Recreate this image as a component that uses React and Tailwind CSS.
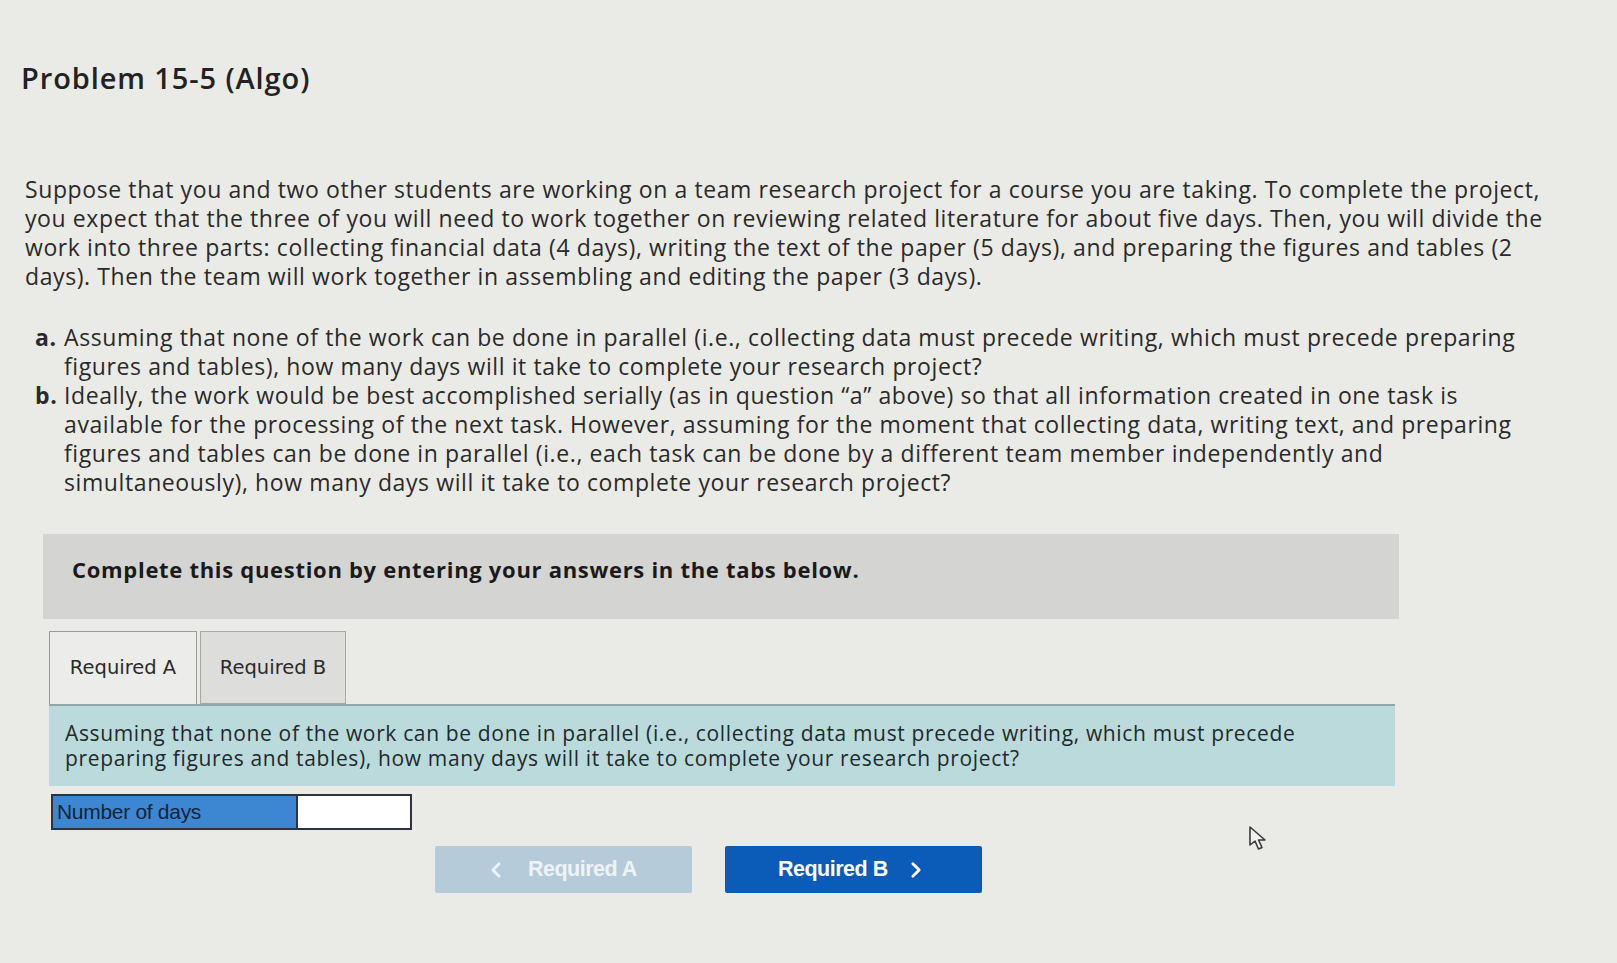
import { HiChevronLeft, HiChevronRight } from 'react-icons/hi2'

const body = "font-['Open_Sans',sans-serif]"

export default function App() {
  return (
    <div className="relative min-h-[963px] w-[1617px] overflow-hidden bg-[#eaeae7] text-[#1c1c1c]">
      {/* Title */}
      <h1 className={`pl-[21px] pt-[59px] text-[29px] font-semibold leading-[38px] tracking-[0.9px] text-[#222] ${body}`}>
        Problem 15-5 (Algo)
      </h1>

      {/* Problem text */}
      <p className={`mt-[78px] whitespace-nowrap pl-[25px] text-[23px] leading-[29px] tracking-[0.6px] text-[#2a2a2a] ${body}`}>
        Suppose that you and two other students are working on a team research project for a course you are taking. To complete the project,
        <br />
        you expect that the three of you will need to work together on reviewing related literature for about five days. Then, you will divide the
        <br />
        work into three parts: collecting financial data (4 days), writing the text of the paper (5 days), and preparing the figures and tables (2
        <br />
        days). Then the team will work together in assembling and editing the paper (3 days).
      </p>

      <div className={`mt-[32px] whitespace-nowrap pl-[35px] text-[23px] leading-[29px] tracking-[0.6px] text-[#2a2a2a] ${body}`}>
        <div className="flex">
          <span className="w-[29px] shrink-0 font-bold">a.</span>
          <span>
            Assuming that none of the work can be done in parallel (i.e., collecting data must precede writing, which must precede preparing
            <br />
            figures and tables), how many days will it take to complete your research project?
          </span>
        </div>
        <div className="flex">
          <span className="w-[29px] shrink-0 font-bold">b.</span>
          <span>
            Ideally, the work would be best accomplished serially (as in question “a” above) so that all information created in one task is
            <br />
            available for the processing of the next task. However, assuming for the moment that collecting data, writing text, and preparing
            <br />
            figures and tables can be done in parallel (i.e., each task can be done by a different team member independently and
            <br />
            simultaneously), how many days will it take to complete your research project?
          </span>
        </div>
      </div>

      {/* Instruction box */}
      <div className="ml-[43px] mt-[37px] h-[85px] w-[1356px] bg-[#d4d4d2] pl-[29px] pt-[21px]">
        <p className={`text-[22px] font-bold leading-[28px] tracking-[0.7px] text-[#1a1a1a] ${body}`}>
          Complete this question by entering your answers in the tabs below.
        </p>
      </div>

      {/* Tabs */}
      <div className="ml-[49px] mt-[12px] flex gap-[3px] font-['DejaVu_Sans',sans-serif] text-[19.5px] text-[#2b2b2b]">
        <div className="flex h-[73px] w-[148px] items-center justify-center border border-b-0 border-[#9a9a98] bg-[#ececea]">
          Required A
        </div>
        <div className="flex h-[73px] w-[146px] items-center justify-center border border-[#a8a8a6] bg-[#dddddb]">
          Required B
        </div>
      </div>

      {/* Question panel */}
      <div className="ml-[49px] h-[82px] w-[1346px] border-t-2 border-[#8fa8aa] bg-[#badadb] pl-[16px] pt-[15px]">
        <p className={`text-[21px] leading-[25px] tracking-[0.65px] text-[#1e2a2c] ${body}`}>
          Assuming that none of the work can be done in parallel (i.e., collecting data must precede writing, which must precede
          <br />
          preparing figures and tables), how many days will it take to complete your research project?
        </p>
      </div>

      {/* Answer row */}
      <div className="ml-[51px] mt-[8px] flex h-[36px] w-[361px] border-2 border-[#2b3440]">
        <div className="flex w-[243px] shrink-0 items-center whitespace-nowrap bg-[#3d87d2] pl-[4px] font-['Liberation_Sans',sans-serif] text-[21px] tracking-[-0.3px] text-[#10243a]">
          Number of days
        </div>
        <input
          type="text"
          className="w-0 min-w-0 flex-1 border-l-2 border-[#2b3440] bg-white outline-none"
          aria-label="Number of days"
        />
      </div>

      {/* Navigation buttons */}
      <div className="ml-[435px] mt-[16px] flex gap-[33px] font-['Liberation_Sans',sans-serif] text-[21.5px] font-bold tracking-[-0.5px]">
        <button
          type="button"
          className="flex h-[47px] w-[257px] items-center gap-[22px] rounded-[2px] bg-[#b6cbd9] pl-[51px] text-[#eef3f7]"
        >
          <HiChevronLeft className="h-[20px] w-[20px] stroke-2" />
          Required A
        </button>
        <button
          type="button"
          className="flex h-[47px] w-[257px] items-center gap-[18px] rounded-[2px] bg-[#0b5cb8] pl-[53px] text-white"
        >
          Required B
          <HiChevronRight className="h-[20px] w-[20px] stroke-2" />
        </button>
      </div>

      {/* Mouse cursor */}
      <svg
        className="absolute left-[1248px] top-[825px]"
        width="22"
        height="28"
        viewBox="0 0 22 28"
        fill="#f2f2f0"
        stroke="#3a3a3a"
        strokeWidth="1.6"
        strokeLinejoin="round"
      >
        <path d="M2 2 L2 20 L7 16 L10.5 24 L14 22.5 L10.5 15 L17 15 Z" />
      </svg>
    </div>
  )
}
